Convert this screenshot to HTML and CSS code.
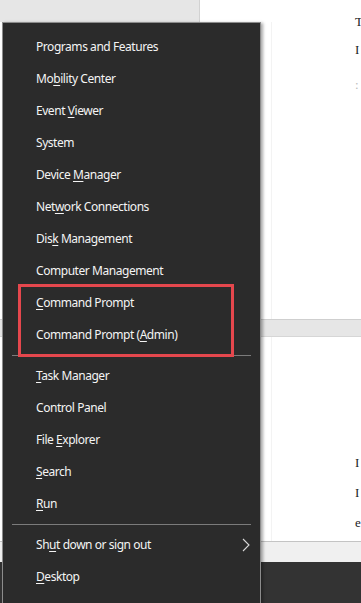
FILE: index.html
```html
<!DOCTYPE html>
<html lang="en">
<head>
    <meta charset="UTF-8">
    <meta name="viewport" content="width=device-width, initial-scale=1.0">
    <title>Quick Link Menu</title>
    <link rel="stylesheet" href="styles.css">
</head>
<body>

    <!-- Window behind the menu -->
    <div class="desktop">
        <div class="topbar">
            <div class="tab"></div>
            <div class="tab-rest"><span class="peek">T</span></div>
        </div>
        <div class="pane pane-top">
            <div class="page">
                <p class="peek">I</p>
                <p class="peek faint">:</p>
            </div>
        </div>
        <div class="band"></div>
        <div class="pane pane-bottom">
            <div class="page page-low">
                <p class="peek">I</p>
                <p class="peek">I</p>
                <p class="peek">e</p>
            </div>
        </div>
        <div class="band band-light"></div>
        <div class="taskbar"></div>
    </div>

    <!-- Win+X menu -->
    <nav class="winx-menu">
        <ul class="menu-list">
            <li class="menu-item">Programs and Features</li>
            <li class="menu-item">Mo<u>b</u>ility Center</li>
            <li class="menu-item">Event <u>V</u>iewer</li>
            <li class="menu-item">System</li>
            <li class="menu-item">Device <u>M</u>anager</li>
            <li class="menu-item">Net<u>w</u>ork Connections</li>
            <li class="menu-item">Dis<u>k</u> Management</li>
            <li class="menu-item">Computer Management</li>
        </ul>

        <div class="highlight">
            <ul class="menu-list">
                <li class="menu-item"><u>C</u>ommand Prompt</li>
                <li class="menu-item">Command Prompt (<u>A</u>dmin)</li>
            </ul>
        </div>

        <hr class="separator">

        <ul class="menu-list">
            <li class="menu-item"><u>T</u>ask Manager</li>
            <li class="menu-item">Control Panel</li>
            <li class="menu-item">File <u>E</u>xplorer</li>
            <li class="menu-item"><u>S</u>earch</li>
            <li class="menu-item"><u>R</u>un</li>
        </ul>

        <hr class="separator">

        <ul class="menu-list">
            <li class="menu-item has-sub">Sh<u>u</u>t down or sign out
                <svg class="chevron" width="8" height="14" viewBox="0 0 8 14">
                    <polyline points="1,1 7,7 1,13" fill="none" stroke="#d8d8d8" stroke-width="1.1"/>
                </svg>
            </li>
            <li class="menu-item"><u>D</u>esktop</li>
        </ul>
    </nav>

</body>
</html>
```

FILE: styles.css
```css
/* General Body Styles */
body {
    margin: 0;
    width: 361px;
    height: 603px;
    overflow: hidden;
    position: relative;
    font-family: 'Noto Sans', 'Open Sans', sans-serif;
    background-color: #fff;
}

/* Background window */
.desktop {
    display: flex;
    flex-direction: column;
    height: 603px;
}

.topbar {
    display: flex;
    height: 22px;
}

.tab {
    width: 199px;
    background-color: #e6e6e6;
    border-right: 1px solid #d2d2d2;
}

.tab-rest {
    flex: 1;
    background-color: #fff;
    position: relative;
    overflow: visible;
}

.pane {
    background-color: #fff;
}

.pane-top {
    height: 297px;
}

.pane-bottom {
    height: 204px;
}

.page {
    margin-left: 271px;
    height: 100%;
    border-left: 1px solid #f3f3f3;
    overflow: hidden;
}

.peek {
    margin: 0;
    padding-left: 83px;
    font-family: 'Liberation Serif', serif;
    font-size: 13px;
    line-height: 15px;
    color: #222;
}

.tab-rest .peek {
    position: absolute;
    top: 14px;
    left: 155px;
    padding-left: 0;
    z-index: 1;
}

.pane-top .peek {
    margin-top: 20px;
}

.faint {
    color: #bbb;
}

.page-low .peek {
    margin-top: 15px;
}

.page-low .peek:first-child {
    margin-top: 118px;
}

.band {
    height: 16px;
    background-color: #e6e6e6;
    border-top: 1px solid #cfcfcf;
    border-bottom: 1px solid #d6d6d6;
}

.band-light {
    height: 20px;
    background-color: #f0f0f0;
    border-top: 1px solid #c4c4c4;
    border-bottom: none;
}

.taskbar {
    flex: 1;
    background-color: #333;
}

/* Win+X Menu */
.winx-menu {
    position: absolute;
    top: 22px;
    left: 2px;
    width: 257px;
    height: 578px;
    padding: 8px 0 0 0;
    box-sizing: content-box;
    background-color: #2b2b2b;
    border: 1px solid #8c8c8c;
    box-shadow: 2px 1px 3px rgba(0, 0, 0, 0.35);
    z-index: 2;
}

.menu-list {
    list-style: none;
    margin: 0;
    padding: 0;
}

.menu-item {
    position: relative;
    height: 32px;
    line-height: 32px;
    padding-left: 33px;
    font-size: 12px;
    letter-spacing: -0.45px;
    color: #f4f4f4;
    white-space: nowrap;
}

.menu-item u {
    text-underline-offset: 2px;
}

.chevron {
    position: absolute;
    right: 10px;
    top: 9px;
}

.separator {
    margin: 4px 9px 4px 9px;
    border: none;
    height: 1px;
    background-color: #7b7b7b;
}

/* Red annotation box */
.highlight {
    position: relative;
}

.highlight::after {
    content: "";
    position: absolute;
    top: -3px;
    bottom: -6px;
    left: 15px;
    right: 26px;
    border: 3px solid #e5474d;
    pointer-events: none;
    z-index: 1;
}
```
